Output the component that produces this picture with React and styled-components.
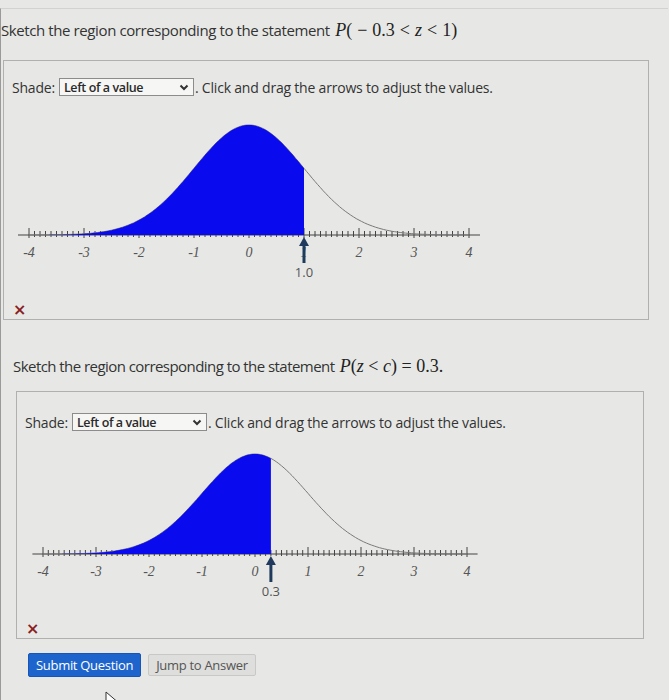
import React from 'react'
import styled, { createGlobalStyle } from 'styled-components'

const GlobalStyle = createGlobalStyle`
  body {
    margin: 0;
    background: #e7e8e5;
    font-family: 'Open Sans', 'Liberation Sans', sans-serif;
    color: #333;
  }
`

const Page = styled.div`
  margin-top: 8px;
  border-top: 1px solid #d2d3d0;
  border-left: 1px solid #9a9a9a;
  padding-top: 10px;
  width: 667px;
  min-height: 691px;
  position: relative;
`

const Statement = styled.p`
  margin: ${({ indent }) => (indent ? '35px 0 0 12px' : '0')};
  font-size: 15px;
  line-height: 22px;
  letter-spacing: ${({ indent }) => (indent ? '-0.55px' : '-0.4px')};
  color: #333;
`

const Math = styled.span`
  font-family: 'Liberation Serif', 'DejaVu Serif', serif;
  font-size: 18px;
  letter-spacing: 0;
  color: #222;
  margin-left: 2px;
`

const V = styled.i`
  font-style: italic;
`

const Op = styled.span`
  margin: 0 ${({ tight }) => (tight ? 4.5 : 5)}px;
`

const Box = styled.div`
  margin: ${({ second }) => (second ? '14px 0 0 15px' : '19px 0 0 2px')};
  width: ${({ second }) => (second ? '610px' : '628px')};
  border: 1px solid #b0b0ae;
  padding: ${({ second }) => (second ? '20px 8px 0' : '16px 8px 0')};
`

const ShadeRow = styled.div`
  display: flex;
  align-items: center;
  height: 20px;
  font-size: 14px;
  letter-spacing: -0.2px;
  color: #333;
`

const Select = styled.div`
  display: flex;
  align-items: center;
  justify-content: space-between;
  width: 135px;
  height: 18px;
  margin-left: 4px;
  padding: 0 4px;
  box-sizing: border-box;
  border: 1px solid #8c8c8c;
  background: #f6f6f4;
  font-size: 12.5px;
  font-weight: 600;
  letter-spacing: -0.4px;
  color: #2a2a2a;
`

const Hint = styled.span`
  margin-left: 1px;
`

const Chart = styled.svg`
  display: block;
  margin-top: 6px;
  overflow: visible;
`

const Wrong = styled.div`
  margin-top: ${({ gap }) => gap}px;
  height: 18px;
  line-height: 18px;
  font-family: 'DejaVu Sans', sans-serif;
  font-size: 16px;
  font-weight: 700;
  color: #8a1f24;
  padding-left: 1px;
`

const Buttons = styled.div`
  display: flex;
  gap: 7px;
  margin: 14px 0 0 27px;
  align-items: center;
`

const Button = styled.button`
  height: ${({ primary }) => (primary ? '24px' : '22px')};
  padding: 0 7px;
  border-radius: 2px;
  border: 1px solid ${({ primary }) => (primary ? '#1656b8' : '#c8c8c6')};
  background: ${({ primary }) => (primary ? '#1d64cc' : '#dededc')};
  color: ${({ primary }) => (primary ? '#fff' : '#555')};
  font-family: 'Open Sans', sans-serif;
  font-size: 13px;
  letter-spacing: -0.3px;
`

const Pointer = styled.svg`
  position: absolute;
  left: 104px;
  top: 682px;
`

const Chevron = () => (
  <svg width="10" height="7" viewBox="0 0 10 7">
    <polyline points="1.5,1.5 5,5 8.5,1.5" fill="none" stroke="#333" strokeWidth="2" />
  </svg>
)

const density = (z) => Math_e ** (-(z * z) / 2)
const Math_e = 2.718281828

const NormalChart = ({ left, unit, peak, axis, cut, label, height }) => {
  const px = (z) => left + (z + 4) * unit
  const py = (z) => axis - peak * density(z)
  const curve = []
  for (let z = -4; z <= 4.0001; z += 0.05) curve.push(`${px(z).toFixed(1)},${py(z).toFixed(1)}`)
  const fill = []
  for (let z = -4; z < cut; z += 0.05) fill.push(`${px(z).toFixed(1)},${py(z).toFixed(1)}`)
  fill.push(`${px(cut).toFixed(1)},${py(cut).toFixed(1)}`)
  const fillPath = `M${px(-4)},${axis} L${fill.join(' L')} L${px(cut)},${axis} Z`
  const ticks = []
  for (let i = -40; i <= 40; i++) {
    const x = px(i / 10)
    const major = i % 10 === 0
    ticks.push(
      <line key={i} x1={x} x2={x} y1={axis - (major ? 7 : 4)} y2={axis + (major ? 3 : 2)} stroke="#444" strokeWidth="1" />
    )
  }
  const ax = px(cut)
  return (
    <Chart width="480" height={height}>
      <line x1={px(-4.2)} x2={px(4.2)} y1={axis} y2={axis} stroke="#444" strokeWidth="1.2" />
      {ticks}
      <polyline points={curve.join(' ')} fill="none" stroke="#7a7a7a" strokeWidth="1" />
      <path d={fillPath} fill="#0a0aee" />
      {[-4, -3, -2, -1, 0, 1, 2, 3, 4].map((n) => (
        <text
          key={n}
          x={px(n)}
          y={axis + 22}
          textAnchor="middle"
          fontFamily="'Liberation Serif', serif"
          fontStyle="italic"
          fontSize="14"
          fill="#555"
        >
          {n}
        </text>
      ))}
      <rect x={ax - 1.5} y={axis + 10} width="3" height="18" fill="#1f3a5c" />
      <polygon points={`${ax},${axis + 2} ${ax - 5},${axis + 11} ${ax + 5},${axis + 11}`} fill="#1f3a5c" />
      <text x={ax} y={axis + 42} textAnchor="middle" fontFamily="'Open Sans', sans-serif" fontSize="13" fill="#555">
        {label}
      </text>
    </Chart>
  )
}

const ShadeControl = () => (
  <ShadeRow>
    Shade:
    <Select>
      Left of a value
      <Chevron />
    </Select>
    <Hint>. Click and drag the arrows to adjust the values.</Hint>
  </ShadeRow>
)

const App = () => (
  <Page>
    <GlobalStyle />
    <Statement>
      Sketch the region corresponding to the statement{' '}
      <Math>
        <V>P</V>(<Op>−</Op>0.3<Op>&lt;</Op>
        <V>z</V>
        <Op>&lt;</Op>1)
      </Math>
    </Statement>

    <Box>
      <ShadeControl />
      <NormalChart left={17} unit={55} peak={110} axis={132} cut={1.0} label="1.0" height={180} />
      <Wrong gap={18}>×</Wrong>
    </Box>

    <Statement indent>
      Sketch the region corresponding to the statement{' '}
      <Math>
        <V>P</V>(<V>z</V>
        <Op tight>&lt;</Op>
        <V>c</V>)<Op tight>=</Op>0.3.
      </Math>
    </Statement>

    <Box second>
      <ShadeControl />
      <NormalChart left={18} unit={53} peak={100} axis={116} cut={0.3} label="0.3" height={160} />
      <Wrong gap={22}>×</Wrong>
    </Box>

    <Buttons>
      <Button primary>Submit Question</Button>
      <Button>Jump to Answer</Button>
    </Buttons>

    <Pointer width="14" height="18" viewBox="0 0 14 18">
      <path d="M1 1 L1 14 L4.5 10.8 L7 16.5 L9 15.6 L6.6 10 L11.5 10 Z" fill="#fff" stroke="#333" strokeWidth="1" />
    </Pointer>
  </Page>
)

export default App
